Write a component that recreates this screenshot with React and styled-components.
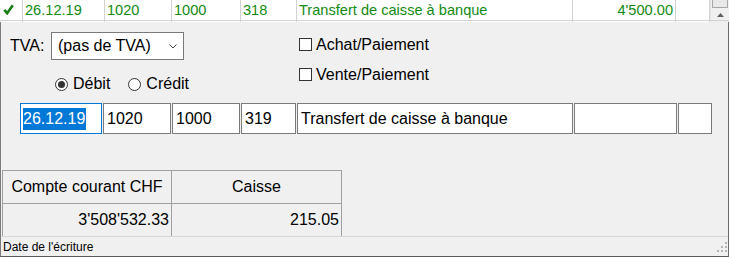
import React from 'react';
import styled, { createGlobalStyle } from 'styled-components';

const GlobalStyle = createGlobalStyle`
  html, body {
    margin: 0;
    padding: 0;
    background: #f0f0f0;
  }
  body {
    font-family: "Liberation Sans", Arial, sans-serif;
    color: #000;
  }
`;

const Window = styled.div`
  width: 729px;
  height: 257px;
  display: flex;
  flex-direction: column;
  overflow: hidden;
  background: #fff;
`;

const gridCols = '23px 82px 67px 69px 56px 276px 103px 34px 19px';

const GridRow = styled.div`
  display: grid;
  grid-template-columns: ${gridCols};
  height: ${p => p.$h}px;
  background: #fff;
  border-bottom: ${p => (p.$line ? '1px solid #d2d2d2' : 'none')};
  box-sizing: content-box;
`;

const Cell = styled.div`
  border-right: 1px solid #d2d2d2;
  padding: 0 2px 0 2px;
  font-size: 14.6px;
  line-height: 20px;
  color: #138a13;
  text-align: ${p => (p.$right ? 'right' : 'left')};
  white-space: nowrap;
  overflow: hidden;
`;

const CheckCell = styled.div`
  border-right: 1px solid #d2d2d2;
  display: flex;
  align-items: flex-start;
  padding: 4px 0 0 3px;
`;

const ScrollCell = styled.div`
  background: #f0f0f0;
  border-left: 1px solid #e6e6e6;
  display: flex;
  flex-direction: column;
  align-items: center;
`;

const ThumbEnd = styled.div`
  width: 16px;
  height: 8px;
  box-sizing: border-box;
  border: 1px solid #a6a6a6;
  border-top: none;
  background: #e8e8e8;
`;

const Panel = styled.div`
  flex: 1;
  display: flex;
  flex-direction: column;
  background: #f0f0f0;
  border-left: 1px solid #7c7c7c;
  border-right: 1px solid #6a6a6a;
  border-bottom: 1px solid #5a5a5a;
  font-size: 16px;
`;

const TopSection = styled.div`
  display: flex;
  padding: 10px 0 0 9px;
`;

const LeftCol = styled.div`
  width: 289px;
  display: flex;
  flex-direction: column;
`;

const TvaRow = styled.div`
  display: flex;
  align-items: center;
  height: 28px;
  gap: 5px;
`;

const TvaLabel = styled.span`
  width: 36px;
`;

const Select = styled.div`
  width: 133px;
  height: 28px;
  box-sizing: border-box;
  border: 1px solid #7a7a7a;
  background: #fff;
  display: flex;
  align-items: center;
  justify-content: space-between;
  padding: 0 6px 0 6px;
`;

const RadioRow = styled.div`
  display: flex;
  align-items: center;
  height: 16px;
  margin-top: 16px;
  padding-left: 45px;
`;

const RadioItem = styled.label`
  display: flex;
  align-items: center;
  gap: 5px;
  margin-right: 18px;
`;

const RadioDot = styled.span`
  width: 13px;
  height: 13px;
  box-sizing: border-box;
  border-radius: 50%;
  border: 1px solid #333;
  background: #fff;
  display: flex;
  align-items: center;
  justify-content: center;
  &::after {
    content: '';
    width: 7px;
    height: 7px;
    border-radius: 50%;
    background: ${p => (p.$on ? '#333' : 'transparent')};
  }
`;

const RightCol = styled.div`
  display: flex;
  flex-direction: column;
  gap: 17px;
  padding-top: 6px;
`;

const CheckRow = styled.label`
  display: flex;
  align-items: center;
  height: 13px;
  gap: 4px;
`;

const Box = styled.span`
  width: 13px;
  height: 13px;
  box-sizing: border-box;
  border: 1px solid #333;
  background: #fff;
`;

const FieldRow = styled.div`
  display: flex;
  gap: 1px;
  margin-top: 11px;
  padding-left: 19px;
`;

const Field = styled.div`
  width: ${p => p.$w}px;
  height: 31px;
  box-sizing: border-box;
  border: 1px solid ${p => (p.$focus ? '#0078d7' : '#7a7a7a')};
  background: #fff;
  display: flex;
  align-items: center;
  padding-left: 3px;
  white-space: nowrap;
  overflow: hidden;
`;

const Selected = styled.span`
  background: #0078d7;
  color: #fff;
  line-height: 22px;
  padding-right: 1px;
  margin-left: -1px;
`;

const Table = styled.div`
  margin: 36px 0 0 1px;
  width: 340px;
  box-sizing: border-box;
  display: grid;
  grid-template-columns: 169px 169px;
  grid-template-rows: 33px 32px;
  border-top: 1px solid #a0a0a0;
  border-left: 1px solid #a0a0a0;
  border-right: 1px solid #a0a0a0;
`;

const TCell = styled.div`
  display: flex;
  align-items: center;
  justify-content: ${p => (p.$head ? 'center' : 'flex-end')};
  padding-right: ${p => (p.$head ? 0 : 2)}px;
  border-bottom: ${p => (p.$head ? '1px solid #a0a0a0' : 'none')};
  border-right: ${p => (p.$first ? '1px solid #a0a0a0' : 'none')};
`;

const StatusBar = styled.div`
  margin-top: auto;
  height: 19px;
  border-top: 1px solid #d7d7d7;
  display: flex;
  align-items: center;
  justify-content: space-between;
  padding: 0 1px 0 2px;
  font-size: 12px;
`;

const Check = () => (
  <svg width="11" height="11" viewBox="0 0 11 11">
    <path d="M1.2 5.8 L4.2 9.2 L9.8 1.2" fill="none" stroke="#1a7d1a" strokeWidth="2.6" />
  </svg>
);

const Chevron = () => (
  <svg width="8" height="5" viewBox="0 0 8 5">
    <path d="M0.5 0.5 L4 4 L7.5 0.5" fill="none" stroke="#444" strokeWidth="1" />
  </svg>
);

const UpArrow = () => (
  <svg width="7" height="4" viewBox="0 0 7 4" style={{ marginTop: 5 }}>
    <path d="M0 4 L3.5 0 L7 4 Z" fill="#606060" />
  </svg>
);

const Grip = () => (
  <svg width="10" height="10" viewBox="0 0 10 10">
    {[[8, 0], [8, 4], [4, 4], [8, 8], [4, 8], [0, 8]].map(([x, y]) => (
      <rect key={`${x}-${y}`} x={x} y={y} width="2" height="2" fill="#b4b4b4" />
    ))}
  </svg>
);

const fields = [
  { w: 82, v: '26.12.19', focus: true },
  { w: 68, v: '1020' },
  { w: 68, v: '1000' },
  { w: 55, v: '319' },
  { w: 276, v: 'Transfert de caisse à banque' },
  { w: 103, v: '' },
  { w: 34, v: '' },
];

export default function App() {
  return (
    <Window>
      <GlobalStyle />
      <GridRow $h={20} $line>
        <CheckCell>
          <Check />
        </CheckCell>
        <Cell>26.12.19</Cell>
        <Cell>1020</Cell>
        <Cell>1000</Cell>
        <Cell>318</Cell>
        <Cell>Transfert de caisse à banque</Cell>
        <Cell $right>4'500.00</Cell>
        <Cell />
        <ScrollCell>
          <ThumbEnd />
          <UpArrow />
        </ScrollCell>
      </GridRow>
      <GridRow $h={1}>
        <Cell />
        <Cell />
        <Cell />
        <Cell />
        <Cell />
        <Cell />
        <Cell />
        <Cell />
        <ScrollCell />
      </GridRow>
      <Panel>
        <TopSection>
          <LeftCol>
            <TvaRow>
              <TvaLabel>TVA:</TvaLabel>
              <Select>
                <span>(pas de TVA)</span>
                <Chevron />
              </Select>
            </TvaRow>
            <RadioRow>
              <RadioItem>
                <RadioDot $on />
                Débit
              </RadioItem>
              <RadioItem>
                <RadioDot />
                Crédit
              </RadioItem>
            </RadioRow>
          </LeftCol>
          <RightCol>
            <CheckRow>
              <Box />
              Achat/Paiement
            </CheckRow>
            <CheckRow>
              <Box />
              Vente/Paiement
            </CheckRow>
          </RightCol>
        </TopSection>
        <FieldRow>
          {fields.map((f, i) => (
            <Field key={i} $w={f.w} $focus={f.focus}>
              {f.focus ? <Selected>{f.v}</Selected> : f.v}
            </Field>
          ))}
        </FieldRow>
        <Table>
          <TCell $head $first>Compte courant CHF</TCell>
          <TCell $head>Caisse</TCell>
          <TCell $first>3'508'532.33</TCell>
          <TCell>215.05</TCell>
        </Table>
        <StatusBar>
          <span>Date de l'écriture</span>
          <Grip />
        </StatusBar>
      </Panel>
    </Window>
  );
}
